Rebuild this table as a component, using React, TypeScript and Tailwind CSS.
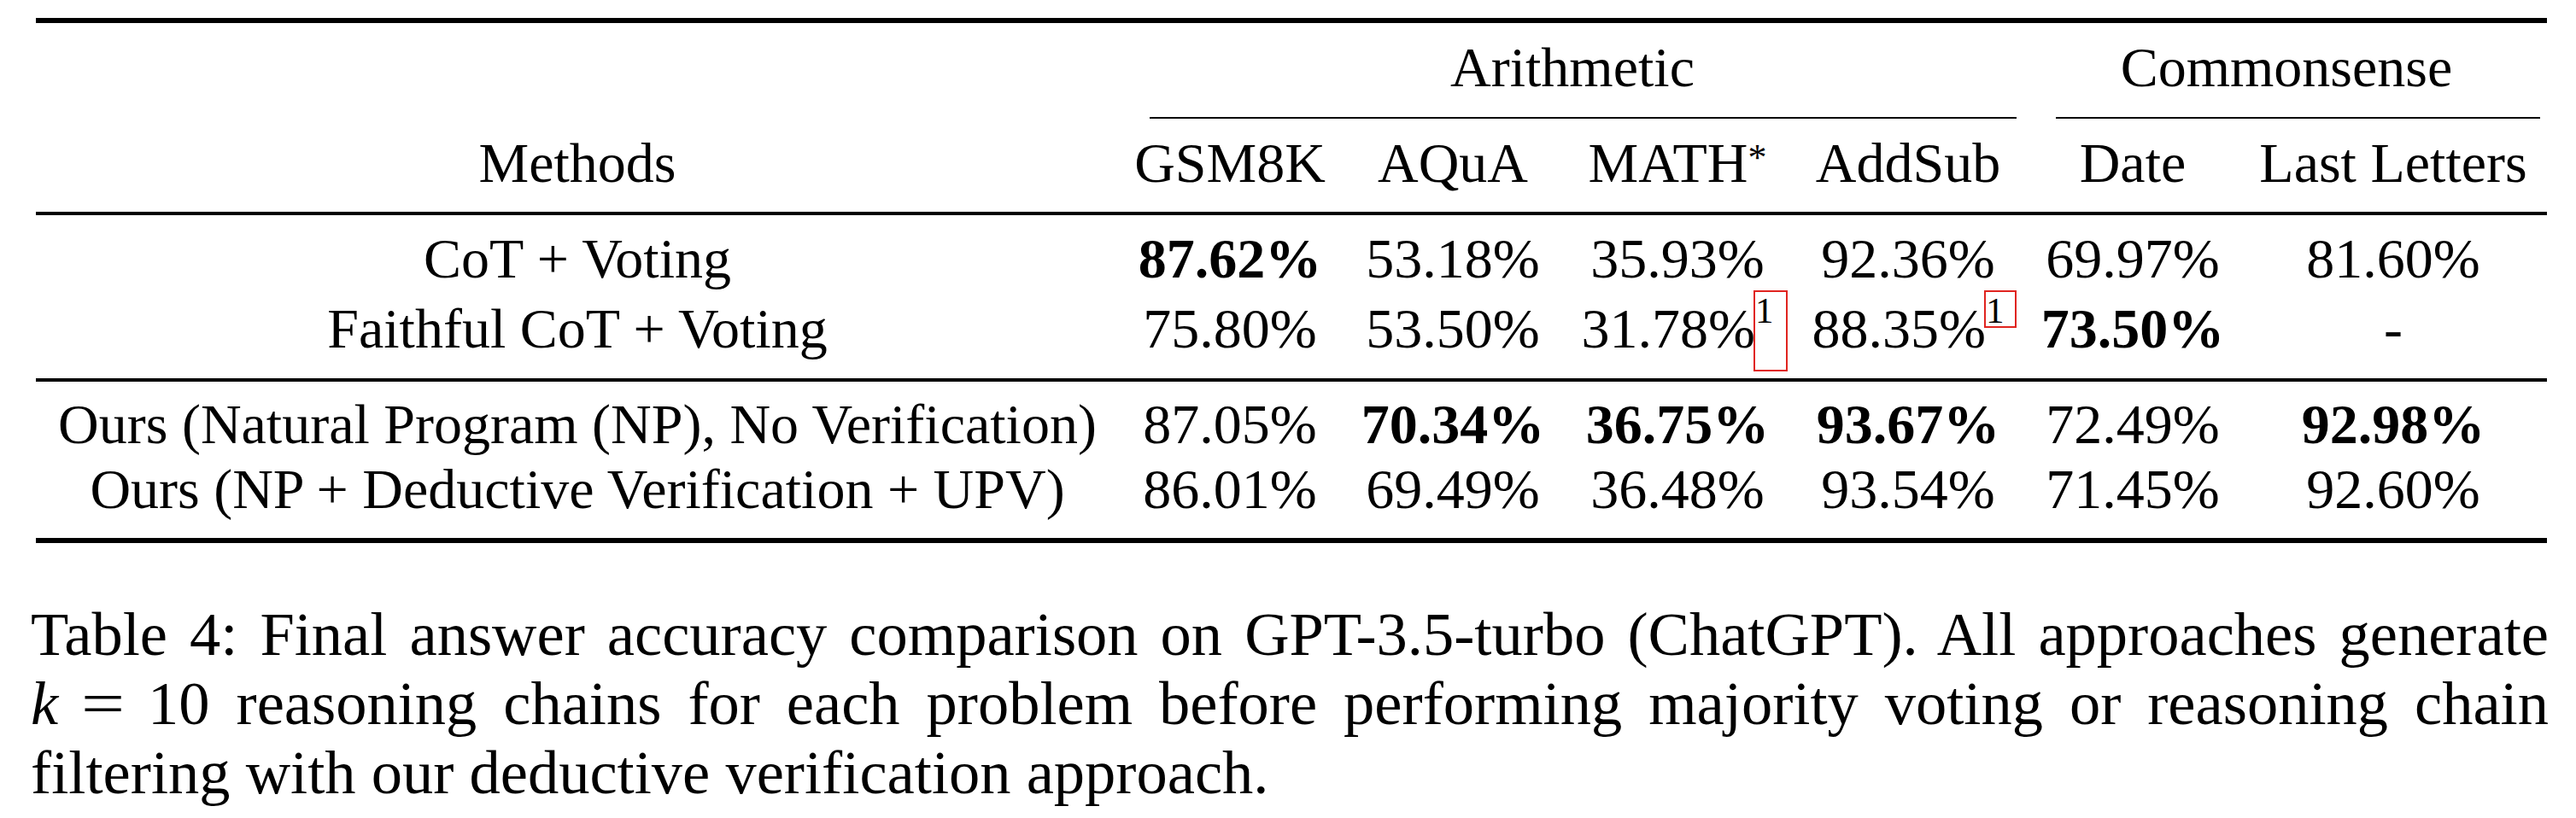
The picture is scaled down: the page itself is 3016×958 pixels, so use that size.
import clsx from "clsx";

type Val = { text: string; bold?: boolean; mark?: "tall" | "short" };
type Row = { method: string; vals: Val[]; h: string; pt: string };

const COLS =
  "grid grid-cols-[1268px_260px_262px_264px_276px_250px_360px] leading-[66px]";

const topGroup: Row[] = [
  {
    method: "CoT + Voting",
    h: "h-[82px]",
    pt: "pt-[18px]",
    vals: [
      { text: "87.62%", bold: true },
      { text: "53.18%" },
      { text: "35.93%" },
      { text: "92.36%" },
      { text: "69.97%" },
      { text: "81.60%" },
    ],
  },
  {
    method: "Faithful CoT + Voting",
    h: "h-[109px]",
    pt: "pt-[18px]",
    vals: [
      { text: "75.80%" },
      { text: "53.50%" },
      { text: "31.78%", mark: "tall" },
      { text: "88.35%", mark: "short" },
      { text: "73.50%", bold: true },
      { text: "-" },
    ],
  },
];

const oursGroup: Row[] = [
  {
    method: "Ours (Natural Program (NP), No Verification)",
    h: "h-[76px]",
    pt: "pt-[17px]",
    vals: [
      { text: "87.05%" },
      { text: "70.34%", bold: true },
      { text: "36.75%", bold: true },
      { text: "93.67%", bold: true },
      { text: "72.49%" },
      { text: "92.98%", bold: true },
    ],
  },
  {
    method: "Ours (NP + Deductive Verification + UPV)",
    h: "h-[107px]",
    pt: "pt-[17px]",
    vals: [
      { text: "86.01%" },
      { text: "69.49%" },
      { text: "36.48%" },
      { text: "93.54%" },
      { text: "71.45%" },
      { text: "92.60%" },
    ],
  },
];

// footnote mark with the hyperref link box drawn round it
function FootMark({ tall }: { tall: boolean }) {
  return (
    <span className="relative -top-[29px] text-[43px] leading-[0] font-normal">
      1
      <span
        className={clsx(
          "absolute -left-[2px] top-0 border-2 border-[#e0241f]",
          tall ? "h-[95px] w-[40px]" : "h-[44px] w-[38px]",
        )}
      />
    </span>
  );
}

function DataRow({ row }: { row: Row }) {
  return (
    <div className={clsx(COLS, row.h, row.pt)}>
      <div className="text-center">{row.method}</div>
      {row.vals.map((v, i) => (
        <div key={i} className={clsx("text-center", v.bold && "font-bold")}>
          {v.text}
          {v.mark ? <FootMark tall={v.mark === "tall"} /> : null}
        </div>
      ))}
    </div>
  );
}

export default function App() {
  return (
    <div className="h-[958px] w-[3016px] overflow-hidden bg-white pt-[21px] font-['Liberation_Serif',serif] text-black">
      <div className="ml-[42px] w-[2940px] text-[66px]">
        <div className="h-[6px] bg-black" />

        <div className={clsx(COLS, "h-[110px] pt-[19px]")}>
          <div />
          <div className="col-span-4 text-center">Arithmetic</div>
          <div className="col-span-2 text-center">Commonsense</div>
        </div>
        <div className={clsx(COLS, "h-[2px]")}>
          <div />
          <div className="col-span-4 ml-[36px] mr-[11px] bg-black" />
          <div className="col-span-2 ml-[35px] mr-[8px] bg-black" />
        </div>

        <div className={clsx(COLS, "h-[109px] pt-[19px]")}>
          <div className="text-center">Methods</div>
          <div className="text-center">GSM8K</div>
          <div className="text-center">AQuA</div>
          <div className="text-center">
            MATH
            <span className="relative -top-[14px] text-[44px] leading-[0]">*</span>
          </div>
          <div className="text-center">AddSub</div>
          <div className="text-center">Date</div>
          <div className="text-center">Last Letters</div>
        </div>
        <div className="h-[4px] bg-black" />

        {topGroup.map((r) => (
          <DataRow key={r.method} row={r} />
        ))}
        <div className="h-[4px] bg-black" />

        {oursGroup.map((r) => (
          <DataRow key={r.method} row={r} />
        ))}
        <div className="h-[6px] bg-black" />
      </div>

      <div className="ml-[36px] mt-[66px] w-[2948px] text-[72.5px] leading-[81px]">
        <div className="text-justify [text-align-last:justify]">
          Table 4: Final answer accuracy comparison on GPT-3.5-turbo (ChatGPT). All approaches generate
        </div>
        <div className="text-justify [text-align-last:justify]">
          <i>k</i>
          <span className="mx-[32px] inline-block scale-x-125">=</span>10 reasoning chains for each problem before performing majority voting or reasoning chain
        </div>
        <div>filtering with our deductive verification approach.</div>
      </div>
    </div>
  );
}
